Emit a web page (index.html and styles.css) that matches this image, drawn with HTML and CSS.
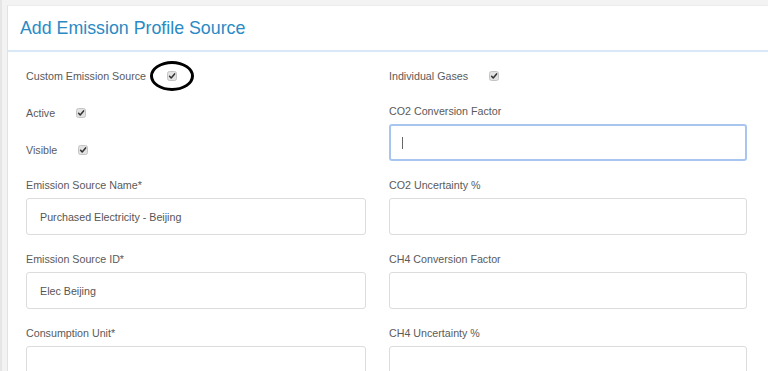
FILE: index.html
```html
<!DOCTYPE html>
<html>
<head>
<meta charset="utf-8">
<link rel="stylesheet" href="styles.css">
</head>
<body>
<div class="sidebar-mark"></div>
<div class="panel">
  <div class="panel-header">
    <h1 class="title">Add Emission Profile Source</h1>
  </div>
  <div class="form">
    <div class="col">
      <div class="check-row">
        <span class="label">Custom Emission Source</span>
        <span class="cb-wrap">
          <svg class="cb" width="10" height="10" viewBox="0 0 10 10"><rect x="0.5" y="0.5" width="9" height="9" rx="2" fill="#e2e2e2" stroke="#c4c4c4"/><path d="M2.6 5.2 L4.2 6.9 L7.6 2.9" fill="none" stroke="#333" stroke-width="1.5" stroke-linecap="round" stroke-linejoin="round"/></svg>
          <span class="ring"></span>
        </span>
      </div>
      <div class="check-row">
        <span class="label">Active</span>
        <span class="cb-wrap">
          <svg class="cb" width="10" height="10" viewBox="0 0 10 10"><rect x="0.5" y="0.5" width="9" height="9" rx="2" fill="#e2e2e2" stroke="#c4c4c4"/><path d="M2.6 5.2 L4.2 6.9 L7.6 2.9" fill="none" stroke="#333" stroke-width="1.5" stroke-linecap="round" stroke-linejoin="round"/></svg>
        </span>
      </div>
      <div class="check-row">
        <span class="label">Visible</span>
        <span class="cb-wrap">
          <svg class="cb" width="10" height="10" viewBox="0 0 10 10"><rect x="0.5" y="0.5" width="9" height="9" rx="2" fill="#e2e2e2" stroke="#c4c4c4"/><path d="M2.6 5.2 L4.2 6.9 L7.6 2.9" fill="none" stroke="#333" stroke-width="1.5" stroke-linecap="round" stroke-linejoin="round"/></svg>
        </span>
      </div>
      <div class="group first">
        <div class="label">Emission Source Name*</div>
        <div class="input">Purchased Electricity - Beijing</div>
      </div>
      <div class="group">
        <div class="label">Emission Source ID*</div>
        <div class="input">Elec Beijing</div>
      </div>
      <div class="group">
        <div class="label">Consumption Unit*</div>
        <div class="input"></div>
      </div>
    </div>
    <div class="col">
      <div class="check-row">
        <span class="label">Individual Gases</span>
        <span class="cb-wrap">
          <svg class="cb" width="10" height="10" viewBox="0 0 10 10"><rect x="0.5" y="0.5" width="9" height="9" rx="2" fill="#e2e2e2" stroke="#c4c4c4"/><path d="M2.6 5.2 L4.2 6.9 L7.6 2.9" fill="none" stroke="#333" stroke-width="1.5" stroke-linecap="round" stroke-linejoin="round"/></svg>
        </span>
      </div>
      <div class="group first">
        <div class="label">CO2 Conversion Factor</div>
        <div class="input focused"><span class="caret"></span></div>
      </div>
      <div class="group">
        <div class="label">CO2 Uncertainty %</div>
        <div class="input"></div>
      </div>
      <div class="group">
        <div class="label">CH4 Conversion Factor</div>
        <div class="input"></div>
      </div>
      <div class="group">
        <div class="label">CH4 Uncertainty %</div>
        <div class="input"></div>
      </div>
    </div>
  </div>
</div>
</body>
</html>
```

FILE: styles.css
```css
html, body {
  margin: 0;
  padding: 0;
  height: 100%;
  overflow: hidden;
}
body {
  background: #f3f3f3;
  font-family: "Liberation Sans", Arial, sans-serif;
  position: relative;
  border-left: 2px solid #e6e6e6;
  box-sizing: border-box;
}
.sidebar-mark {
  position: absolute;
  left: -2px;
  top: 49px;
  width: 2px;
  height: 36px;
  background: #2a8ac4;
}
.panel {
  margin: 5px 0 0 5px;
  width: 820px;
  height: 400px;
  background: #fff;
  border-left: 1px solid #e2e2e2;
  border-top: 1px solid #ececec;
}
.panel-header {
  height: 44px;
  padding-left: 12px;
  border-bottom: 2px solid #d8e8f6;
  display: flex;
  align-items: center;
}
.title {
  margin: 0;
  font-size: 17.8px;
  font-weight: normal;
  color: #2a8ac4;
}
.form {
  display: grid;
  grid-template-columns: 340px 358px;
  column-gap: 23px;
  padding: 5px 0 0 18px;
}
.col {
  display: flex;
  flex-direction: column;
}
.check-row {
  height: 37px;
  display: flex;
  align-items: center;
}
.label {
  font-size: 10.7px;
  line-height: 14px;
  color: #5a5a5a;
}
.cb-wrap {
  position: relative;
  margin-left: 21px;
  width: 10px;
  height: 10px;
  display: inline-block;
}
.cb {
  display: block;
}
.ring {
  position: absolute;
  left: -17px;
  top: -10px;
  width: 38px;
  height: 24px;
  border: 3px solid #000;
  border-radius: 50%;
}
.group {
  margin-bottom: 17px;
}
.group.first {
  margin-top: 10px;
}
.group .input {
  margin-top: 6px;
}
.input {
  height: 37px;
  box-sizing: border-box;
  border: 1px solid #dcdcdc;
  border-radius: 3px;
  padding-left: 13px;
  font-size: 10.7px;
  color: #555;
  display: flex;
  align-items: center;
}
.input.focused {
  border: 2px solid #a8c5ef;
  padding-left: 11px;
}
.caret {
  display: block;
  width: 1px;
  height: 12px;
  background: #666;
}
```
